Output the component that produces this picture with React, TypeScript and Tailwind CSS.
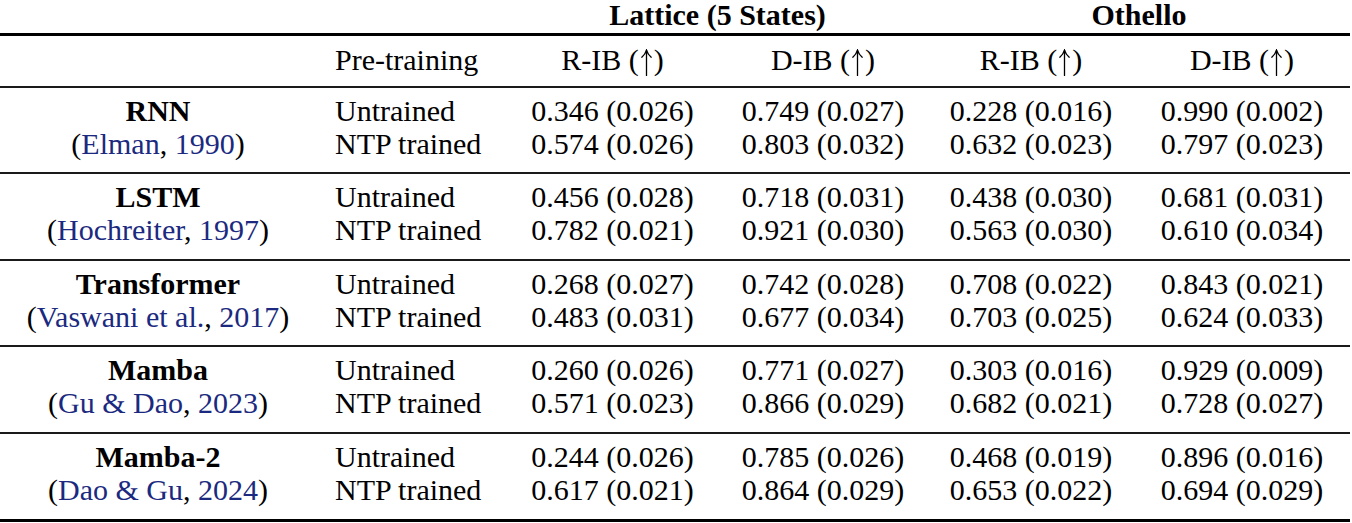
import React from 'react';

// Results table: probing scores per architecture (Lattice / Othello)

type Cite = { author: string; year: string };

type Block = {
  model: string;
  cite: Cite;
  height: string;
  untrained: string[];
  trained: string[];
};

const blocks: Block[] = [
  {
    model: 'RNN',
    cite: { author: 'Elman', year: '1990' },
    height: 'h-[86px]',
    untrained: ['0.346 (0.026)', '0.749 (0.027)', '0.228 (0.016)', '0.990 (0.002)'],
    trained: ['0.574 (0.026)', '0.803 (0.032)', '0.632 (0.023)', '0.797 (0.023)'],
  },
  {
    model: 'LSTM',
    cite: { author: 'Hochreiter', year: '1997' },
    height: 'h-[87px]',
    untrained: ['0.456 (0.028)', '0.718 (0.031)', '0.438 (0.030)', '0.681 (0.031)'],
    trained: ['0.782 (0.021)', '0.921 (0.030)', '0.563 (0.030)', '0.610 (0.034)'],
  },
  {
    model: 'Transformer',
    cite: { author: 'Vaswani et al.', year: '2017' },
    height: 'h-[86px]',
    untrained: ['0.268 (0.027)', '0.742 (0.028)', '0.708 (0.022)', '0.843 (0.021)'],
    trained: ['0.483 (0.031)', '0.677 (0.034)', '0.703 (0.025)', '0.624 (0.033)'],
  },
  {
    model: 'Mamba',
    cite: { author: 'Gu & Dao', year: '2023' },
    height: 'h-[87px]',
    untrained: ['0.260 (0.026)', '0.771 (0.027)', '0.303 (0.016)', '0.929 (0.009)'],
    trained: ['0.571 (0.023)', '0.866 (0.029)', '0.682 (0.021)', '0.728 (0.027)'],
  },
  {
    model: 'Mamba-2',
    cite: { author: 'Dao & Gu', year: '2024' },
    height: 'h-[87px]',
    untrained: ['0.244 (0.026)', '0.785 (0.026)', '0.468 (0.019)', '0.896 (0.016)'],
    trained: ['0.617 (0.021)', '0.864 (0.029)', '0.653 (0.022)', '0.694 (0.029)'],
  },
];

const cols = 'grid grid-cols-[316px_191px_211px_210px_206px_216px]';

function ThinRule() {
  return <div className="h-[1.5px] bg-[#1a1a1a]" />;
}

function ThickRule() {
  return <div className="h-[2.5px] bg-black" />;
}

// math-style \uparrow, as tall as the parentheses around it
function UpArrow() {
  return (
    <svg
      width="15"
      height="27"
      viewBox="0 0 15 27"
      className="inline-block align-[-6px]"
      fill="none"
      stroke="black"
      strokeWidth="1.3"
      strokeLinecap="round"
    >
      <path d="M7.5 26.5 V1.5" />
      <path d="M2.8 8.2 Q6.3 5.2 7.5 1.2 Q8.7 5.2 12.2 8.2" />
    </svg>
  );
}

function MetricHead({ name }: { name: string }) {
  return (
    <div className="text-center">
      {name} (<UpArrow />)
    </div>
  );
}

export default function App() {
  return (
    <div
      className="w-[1352px] bg-white text-black text-[30px] leading-[33px]"
      style={{ fontFamily: '"Liberation Serif", "Times New Roman", serif' }}
    >
      <div className="w-[1350px]">
        {/* Group headers */}
        <div className={`${cols} h-[33px] leading-[30px] font-bold`}>
          <div />
          <div />
          <div className="col-span-2 text-center">Lattice (5 States)</div>
          <div className="col-span-2 text-center">Othello</div>
        </div>
        <ThickRule />

        {/* Column headers */}
        <div className={`${cols} h-[50.5px] pt-[7px]`}>
          <div />
          <div className="pl-[19px]">Pre-training</div>
          <MetricHead name="R-IB" />
          <MetricHead name="D-IB" />
          <MetricHead name="R-IB" />
          <MetricHead name="D-IB" />
        </div>

        {blocks.map((b) => (
          <div key={b.model} className={`${b.height} flex flex-col`}>
            <ThinRule />
            <div className={`${cols} pt-[6px]`}>
              <div className="flex flex-col items-center">
                <span className="font-bold">{b.model}</span>
                <span>
                  (<span className="text-[#1b2a80]">{b.cite.author}</span>,{' '}
                  <span className="text-[#1b2a80]">{b.cite.year}</span>)
                </span>
              </div>
              <div className="flex flex-col pl-[19px]">
                <span>Untrained</span>
                <span>NTP trained</span>
              </div>
              {b.untrained.map((v, i) => (
                <div key={i} className="flex flex-col items-center">
                  <span>{v}</span>
                  <span>{b.trained[i]}</span>
                </div>
              ))}
            </div>
          </div>
        ))}
        <ThickRule />
      </div>
    </div>
  );
}
